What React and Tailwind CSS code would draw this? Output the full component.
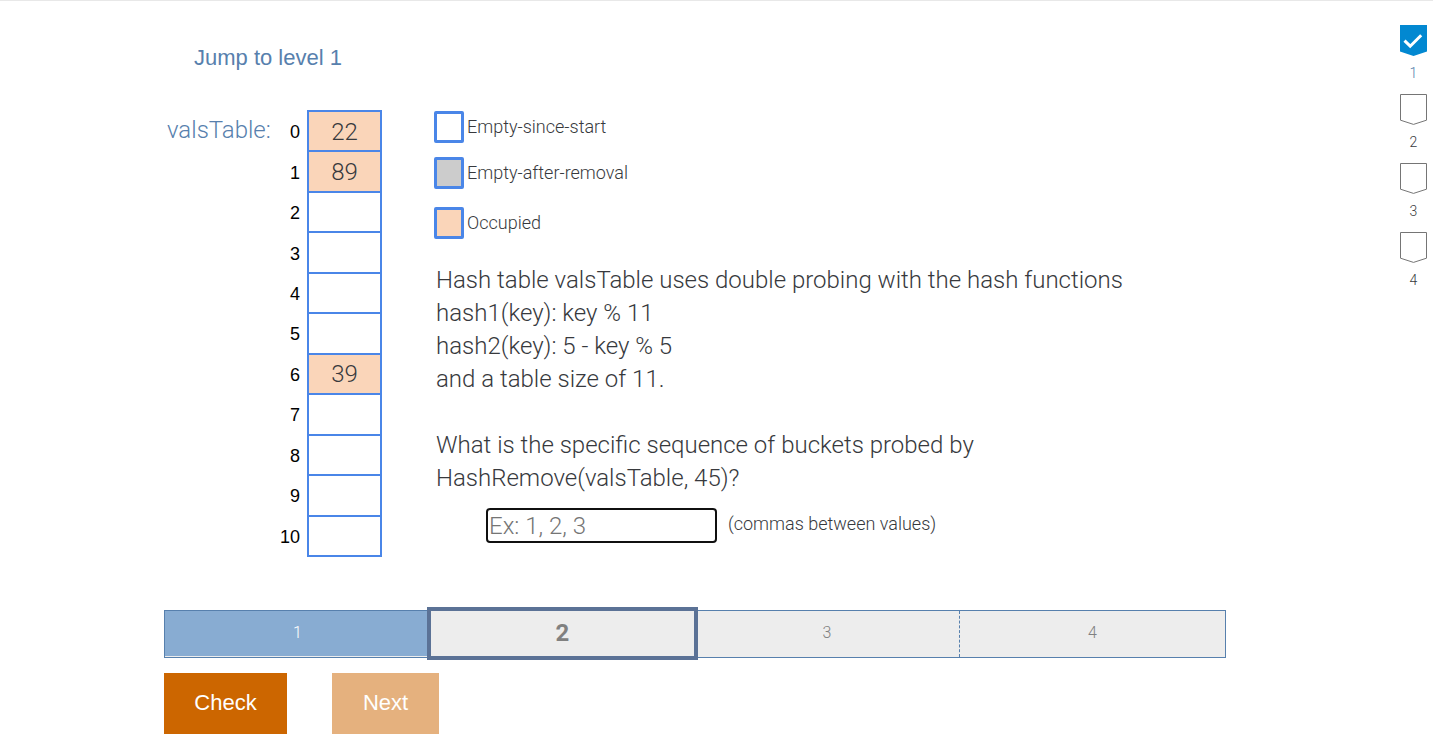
const buckets = [22, 89, null, null, null, null, 39, null, null, null, null];

const legend = [
  { label: "Empty-since-start", fill: "bg-white", gap: "" },
  { label: "Empty-after-removal", fill: "bg-[#cccccc]", gap: "mt-3.5" },
  { label: "Occupied", fill: "bg-[#fad5b9]", gap: "mt-[18px]" },
];

const levels = [
  { n: 1, done: true },
  { n: 2, done: false },
  { n: 3, done: false },
  { n: 4, done: false },
];

function LevelMark({ done }) {
  return (
    <svg width="27" height="31" viewBox="0 0 27 31" aria-hidden="true">
      {done ? (
        <>
          <path d="M0 0H27V26.5L13.5 31L0 26.5Z" fill="#0288d1" />
          <path d="M4.5 15.7L10.2 21.2L21.2 10.2" fill="none" stroke="#fff" strokeWidth="3" />
        </>
      ) : (
        <path d="M0.5 0.5H26.5V26.2L13.5 30.4L0.5 26.2Z" fill="#fff" stroke="#757575" />
      )}
    </svg>
  );
}

function BucketTable() {
  return (
    <table className="h-[447px] border-collapse" aria-label="valsTable">
      <tbody>
        {buckets.map((value, i) => (
          <tr key={i}>
            <th scope="row" className="w-8 p-0 pt-0.5 pr-[7px] text-right align-middle font-['Liberation_Sans',sans-serif] text-lg leading-6 font-normal text-black">
              {i}
            </th>
            <td className={`w-[73px] border-2 border-[#4a86e8] p-0 pt-px text-center text-2xl leading-6 ${value === null ? "bg-white" : "bg-[#fad5b9]"}`}>
              {value ?? "\u00a0"}
            </td>
          </tr>
        ))}
      </tbody>
    </table>
  );
}

export default function App() {
  return (
    <div className="flex border-t border-[#e8e8e8] bg-white font-[Roboto,sans-serif] font-light text-[#37393d]">
      <main className="ml-41 min-w-0 flex-1">
        <button type="button" className="mt-[27px] block h-[61px] px-[30px] pb-0.5 font-['Liberation_Sans',sans-serif] text-[22px] font-normal text-[#5780ad]">
          Jump to level 1
        </button>

        <div className="mt-[21px] flex items-start">
          <div className="w-28 pt-1 pl-[3px] text-2xl leading-8 text-[#5780ad]">valsTable:</div>
          <BucketTable />
          <section className="ml-[52px] min-w-0 flex-1 pt-px">
            <ul>
              {legend.map(({ label, fill, gap }) => (
                <li key={label} className={`flex items-center gap-[3px] text-lg leading-8 ${gap}`}>
                  <span className={`h-8 w-[30px] rounded-xs border-3 border-[#4a86e8] ${fill}`} />
                  {label}
                </li>
              ))}
            </ul>
            <div className="mt-[25px] ml-0.5 text-2xl leading-[33px]">
              <p>Hash table valsTable uses double probing with the hash functions</p>
              <p>hash1(key): key % 11</p>
              <p>hash2(key): 5 - key % 5</p>
              <p>and a table size of 11.</p>
              <p className="mt-[33px]">What is the specific sequence of buckets probed by</p>
              <p>HashRemove(valsTable, 45)?</p>
            </div>
            <div className="mt-[13px] ml-[52px] flex items-center gap-[11px]">
              <input
                id="answer"
                type="text"
                placeholder="Ex: 1, 2, 3"
                className="h-[35px] w-[231px] rounded-sm border-2 border-[#101010] px-px text-2xl outline-none placeholder:text-[#757575]"
              />
              <label htmlFor="answer" className="pb-1 text-lg leading-6">(commas between values)</label>
            </div>
          </section>
        </div>

        <ol className="mt-[53px] mr-[174px] grid h-12 grid-cols-4 border border-[#5780ad] bg-[#ededed] text-center text-base text-[#808080]">
          <li className="flex items-center justify-center border-b border-[#ededed] bg-[#88acd2] pb-0.5 text-white">1</li>
          <li aria-current="step" className="-mx-[3px] -mt-1 -mb-[3px] flex items-center justify-center border-4 border-[#5b7296] bg-[#ededed] pb-0.5 text-2xl font-bold">2</li>
          <li className="flex items-center justify-center border-r border-dashed border-[#5780ad] pb-0.5">3</li>
          <li className="flex items-center justify-center pb-0.5">4</li>
        </ol>

        <div className="mt-[15px] flex gap-[45px] pb-[5px] font-['Liberation_Sans',sans-serif] text-[22px] font-normal text-white">
          <button type="button" className="h-[61px] min-w-[123px] bg-[#cc6600] px-[30px] pb-0.5">Check</button>
          <button type="button" disabled className="h-[61px] min-w-[107px] bg-[#cc6600] px-[30px] pb-0.5 opacity-50">Next</button>
        </div>
      </main>

      <aside aria-label="Levels" className="w-[33px] shrink-0 pt-6">
        <ol className="flex w-[27px] flex-col gap-[13px]">
          {levels.map(({ n, done }) => (
            <li key={n} className="flex flex-col items-center gap-[9px] text-sm leading-4">
              <LevelMark done={done} />
              <span className={done ? "text-[#5780ad]" : ""}>{n}</span>
            </li>
          ))}
        </ol>
      </aside>
    </div>
  );
}
